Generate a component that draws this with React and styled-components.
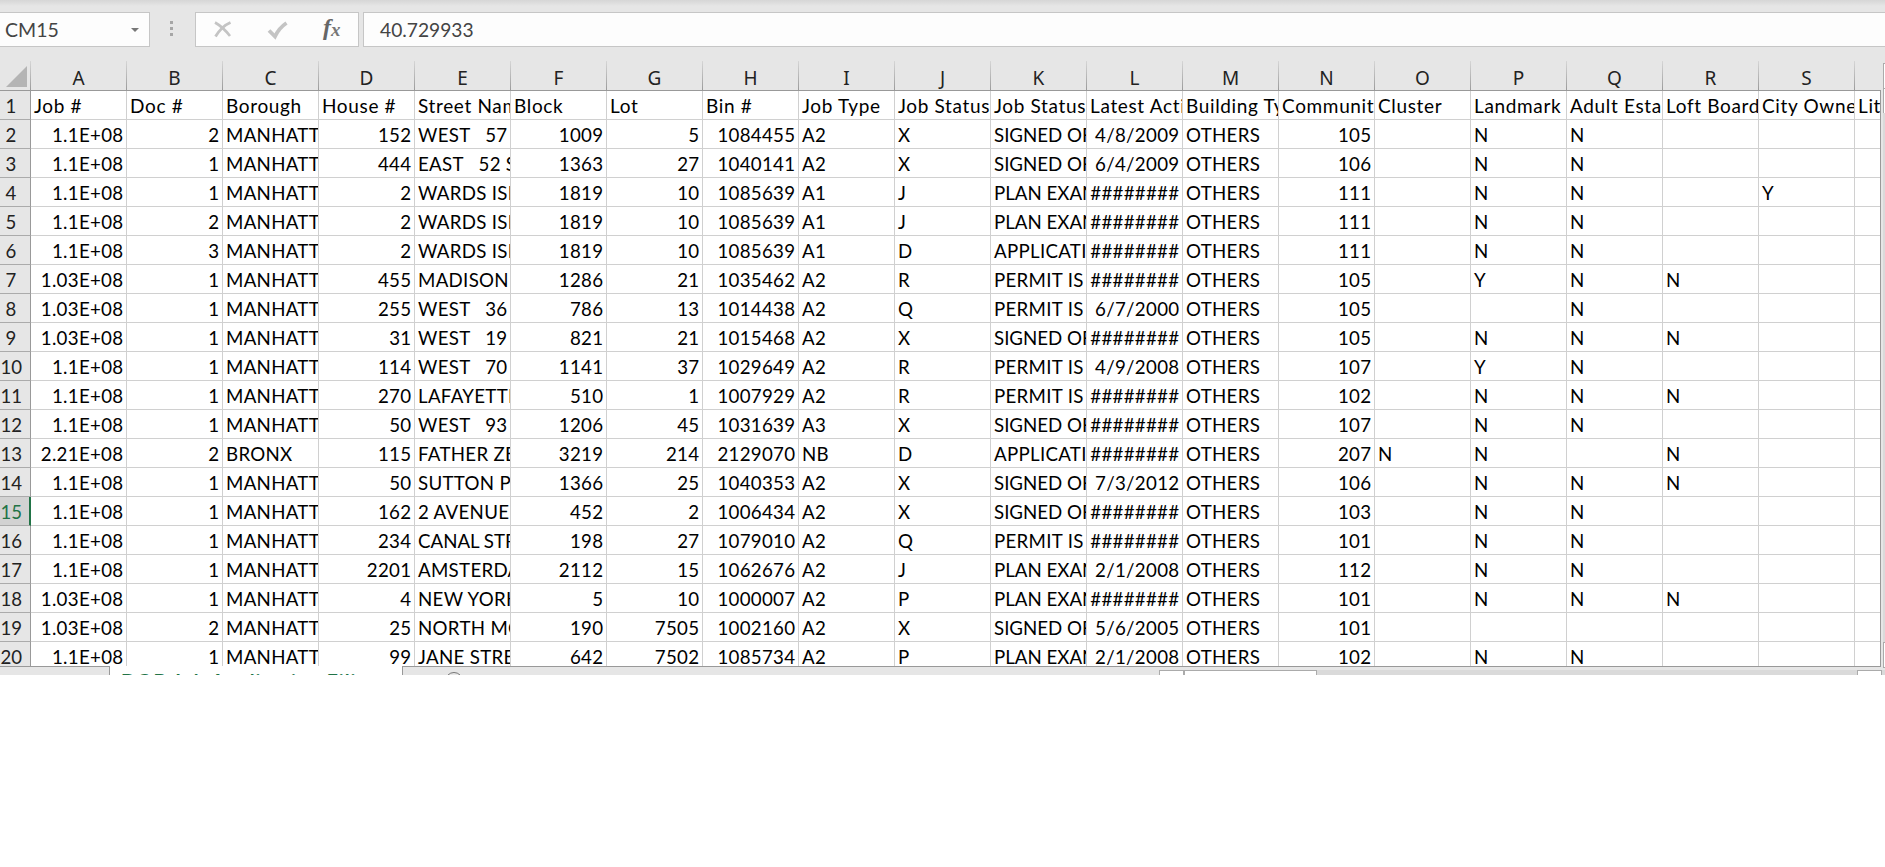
import React from 'react';
import styled, { createGlobalStyle } from 'styled-components';

const GlobalStyle = createGlobalStyle`
  * {
    box-sizing: border-box;
  }

  body {
    margin: 0;
    background: #fff;
    font-family: Lato, 'Liberation Sans', sans-serif;
    color: #000;
    overflow: hidden;
  }
`;

const Window = styled.div`
  width: 1885px;
  height: 675px;
  background: #e6e6e6;
  overflow: hidden;
`;

const FormulaBar = styled.div`
  display: flex;
  height: 61px;
  padding-top: 12px;
  background: linear-gradient(#d6d6d6, #e6e6e6 6px);
`;

const NameBox = styled.div`
  display: flex;
  justify-content: space-between;
  align-items: center;
  width: 150px;
  height: 35px;
  padding: 0 10px 0 5px;
  background: #fdfdfd;
  border: 1px solid #c6c6c6;
  border-left: none;
  font-size: 19.5px;
  color: #444;
`;

const DropArrow = styled.span`
  border: 4px solid transparent;
  border-top-color: #777;
  border-bottom: none;
`;

const Grip = styled.div`
  display: flex;
  flex-direction: column;
  gap: 3px;
  width: 45px;
  padding: 9px 0 0 20px;
`;

const GripDot = styled.span`
  width: 3px;
  height: 3px;
  background: #a6a6a6;
`;

const Actions = styled.div`
  display: flex;
  align-items: center;
  width: 164px;
  height: 35px;
  margin-right: 4px;
  background: #fdfdfd;
  border: 1px solid #c6c6c6;
`;

const FormulaInput = styled.div`
  flex: 1;
  height: 35px;
  padding-left: 16px;
  line-height: 34px;
  background: #fdfdfd;
  border: 1px solid #c6c6c6;
  border-right: none;
  font-size: 19.2px;
  color: #444;
`;

const Sheet = styled.div`
  display: flex;
  height: 606px;
`;

const Grid = styled.div`
  width: 1881px;
  height: 606px;
  overflow: hidden;
`;

const HeaderRow = styled.div`
  display: flex;
  height: 30px;
  border-bottom: 1px solid #999;
`;

const Corner = styled.div`
  display: flex;
  justify-content: flex-end;
  flex: none;
  width: 31px;
  padding: 5px 3px 0 0;
  border-right: 1px solid;
  border-image: linear-gradient(#d8d8d8, #999) 1;
`;

const ColumnHead = styled.div`
  flex: none;
  width: 96px;
  padding-top: 2px;
  line-height: 31px;
  text-align: center;
  font-family: 'Noto Sans', sans-serif;
  font-size: 19px;
  color: #222;
  border-right: 1px solid;
  border-image: linear-gradient(#d8d8d8, #999) 1;
`;

const Body = styled.div`
  height: 576px;
  width: 1881px;
  overflow: hidden;
  border-right: 1px solid #999;
  border-bottom: 1px solid #999;
`;

const Row = styled.div`
  display: flex;
  height: 29px;
`;

const RowHead = styled.div`
  flex: none;
  width: 31px;
  padding-right: ${(props) => (props.$selected ? '7px' : '8px')};
  line-height: 31px;
  text-align: ${(props) => (props.$short ? 'center' : 'right')};
  font-size: 18.6px;
  color: ${(props) => (props.$selected ? '#217346' : '#222')};
  background: ${(props) => (props.$selected ? '#d2d2d2' : '#e6e6e6')};
  border-right: ${(props) => (props.$selected ? '2px solid #217346' : '1px solid #999')};
  border-bottom: 1px solid #ababab;
`;

const Cell = styled.div`
  flex: none;
  width: 96px;
  padding: 0 ${(props) => (props.$right ? '2.6px' : '0')} 0 3px;
  line-height: 31px;
  white-space: pre;
  overflow: hidden;
  text-align: ${(props) => (props.$right ? 'right' : 'left')};
  font-size: 18.7px;
  letter-spacing: ${(props) => (props.$tight ? '0' : '0.3px')};
  background: #fff;
  border-right: 1px solid #d0d0d0;
  border-bottom: 1px solid #d0d0d0;
`;

const TitleCell = styled(Cell)`
  line-height: 29px;
  font-size: 19px;
  letter-spacing: 0.65px;
`;

const ScrollRail = styled.div`
  flex: 1;
  display: flex;
  flex-direction: column;
  padding: 2px 0 0 2px;
`;

const RailButton = styled.div`
  height: 26px;
  margin-bottom: -1px;
  background: #fff;
  border: 1px solid #ababab;
  border-right: none;
`;

const RailTrack = styled.div`
  flex: 1;
  background: #dadada;
`;

const Footer = styled.div`
  display: flex;
  height: 8px;
`;

const TabStrip = styled.div`
  display: flex;
  width: 1159px;
`;

const TabGap = styled.div`
  width: 110px;
  border-right: 1px solid #999;
`;

const SheetTab = styled.div`
  width: 292px;
  height: 9px;
  margin-top: -1px;
  padding-left: 11px;
  line-height: 30px;
  background: #fff;
  font-size: 19.5px;
  font-weight: 700;
  letter-spacing: 1px;
  color: #217346;
  white-space: nowrap;
  overflow: hidden;
`;

const NewSheet = styled.div`
  flex: 1;
  padding: 5px 0 0 42px;
  border-left: 1px solid #999;
`;

const Circle = styled.div`
  width: 18px;
  height: 18px;
  border: 1px solid #777;
  border-radius: 50%;
`;

const ScrollBar = styled.div`
  display: flex;
  flex: 1;
  height: 5px;
  margin-top: 3px;
  padding-right: 3px;
  background: #dadada;
`;

const BarPiece = styled.div`
  width: ${(props) => props.$width}px;
  background: #fff;
  border: 1px solid #ababab;
  border-bottom: none;
`;

const BarTrack = styled.div`
  flex: 1;
`;

const columns = 'ABCDEFGHIJKLMNOPQRS'.split('').concat('');

// columns holding numbers or dates
const numeric = [0, 1, 3, 5, 6, 7, 11, 13];

const titles = [
  'Job #', 'Doc #', 'Borough', 'House #', 'Street Nam', 'Block', 'Lot', 'Bin #', 'Job Type', 'Job Status',
  'Job Status', 'Latest Acti', 'Building Ty', 'Communit', 'Cluster', 'Landmark', 'Adult Esta', 'Loft Board',
  'City Owne', 'Lit',
];

const SIGNED = 'SIGNED OF';
const PLAN = 'PLAN EXAN';
const PERMIT = 'PERMIT IS';
const APPL = 'APPLICATI';
const HASH = '########';
const M = 'MANHATT';
const O = 'OTHERS';

const rows = [
  ['1.1E+08', 2, M, 152, 'WEST   57', 1009, 5, 1084455, 'A2', 'X', SIGNED, '4/8/2009', O, 105, '', 'N', 'N', '', ''],
  ['1.1E+08', 1, M, 444, 'EAST   52 S', 1363, 27, 1040141, 'A2', 'X', SIGNED, '6/4/2009', O, 106, '', 'N', 'N', '', ''],
  ['1.1E+08', 1, M, 2, 'WARDS ISL', 1819, 10, 1085639, 'A1', 'J', PLAN, HASH, O, 111, '', 'N', 'N', '', 'Y'],
  ['1.1E+08', 2, M, 2, 'WARDS ISL', 1819, 10, 1085639, 'A1', 'J', PLAN, HASH, O, 111, '', 'N', 'N', '', ''],
  ['1.1E+08', 3, M, 2, 'WARDS ISL', 1819, 10, 1085639, 'A1', 'D', APPL, HASH, O, 111, '', 'N', 'N', '', ''],
  ['1.03E+08', 1, M, 455, 'MADISON', 1286, 21, 1035462, 'A2', 'R', PERMIT, HASH, O, 105, '', 'Y', 'N', 'N', ''],
  ['1.03E+08', 1, M, 255, 'WEST   36', 786, 13, 1014438, 'A2', 'Q', PERMIT, '6/7/2000', O, 105, '', '', 'N', '', ''],
  ['1.03E+08', 1, M, 31, 'WEST   19', 821, 21, 1015468, 'A2', 'X', SIGNED, HASH, O, 105, '', 'N', 'N', 'N', ''],
  ['1.1E+08', 1, M, 114, 'WEST   70', 1141, 37, 1029649, 'A2', 'R', PERMIT, '4/9/2008', O, 107, '', 'Y', 'N', '', ''],
  ['1.1E+08', 1, M, 270, 'LAFAYETTE', 510, 1, 1007929, 'A2', 'R', PERMIT, HASH, O, 102, '', 'N', 'N', 'N', ''],
  ['1.1E+08', 1, M, 50, 'WEST   93', 1206, 45, 1031639, 'A3', 'X', SIGNED, HASH, O, 107, '', 'N', 'N', '', ''],
  ['2.21E+08', 2, 'BRONX', 115, 'FATHER ZE', 3219, 214, 2129070, 'NB', 'D', APPL, HASH, O, 207, 'N', 'N', '', 'N', ''],
  ['1.1E+08', 1, M, 50, 'SUTTON P', 1366, 25, 1040353, 'A2', 'X', SIGNED, '7/3/2012', O, 106, '', 'N', 'N', 'N', ''],
  ['1.1E+08', 1, M, 162, '2 AVENUE', 452, 2, 1006434, 'A2', 'X', SIGNED, HASH, O, 103, '', 'N', 'N', '', ''],
  ['1.1E+08', 1, M, 234, 'CANAL STR', 198, 27, 1079010, 'A2', 'Q', PERMIT, HASH, O, 101, '', 'N', 'N', '', ''],
  ['1.1E+08', 1, M, 2201, 'AMSTERDA', 2112, 15, 1062676, 'A2', 'J', PLAN, '2/1/2008', O, 112, '', 'N', 'N', '', ''],
  ['1.03E+08', 1, M, 4, 'NEW YORK', 5, 10, 1000007, 'A2', 'P', PLAN, HASH, O, 101, '', 'N', 'N', 'N', ''],
  ['1.03E+08', 2, M, 25, 'NORTH MO', 190, 7505, 1002160, 'A2', 'X', SIGNED, '5/6/2005', O, 101, '', '', '', '', ''],
  ['1.1E+08', 1, M, 99, 'JANE STRE', 642, 7502, 1085734, 'A2', 'P', PLAN, '2/1/2008', O, 102, '', 'N', 'N', '', ''],
];

// labels that only show their last letter when set without extra spacing
const tight = [SIGNED, PLAN, 'CANAL STR'];

const ActionIcons = () => (
  <svg width="160" height="33" viewBox="0 0 160 33">
    <path d="M19 9.5Q27 14 34 23" stroke="#c4c4c4" strokeWidth="2.6" fill="none" />
    <path d="M34.5 9.5Q26 13 19.5 23.5" stroke="#c4c4c4" strokeWidth="2.8" fill="none" />
    <path d="M73 17.5l6 6Q83 15 90.5 10" stroke="#c4c4c4" strokeWidth="3.8" fill="none" />
    <text x="127" y="22" fontFamily="Liberation Serif, serif" fontStyle="italic" fontWeight="700" fontSize="24" fill="#666">f</text>
    <text x="135" y="23" fontFamily="Liberation Serif, serif" fontStyle="italic" fontWeight="700" fontSize="19" fill="#777">x</text>
  </svg>
);

const App = () => (
  <>
    <GlobalStyle />
    <Window>
      <FormulaBar>
        <NameBox>
          CM15
          <DropArrow />
        </NameBox>
        <Grip>
          <GripDot />
          <GripDot />
          <GripDot />
        </Grip>
        <Actions>
          <ActionIcons />
        </Actions>
        <FormulaInput>40.729933</FormulaInput>
      </FormulaBar>
      <Sheet>
        <Grid>
          <HeaderRow>
            <Corner>
              <svg width="21" height="21" viewBox="0 0 21 21">
                <path d="M21 0v21H0z" fill="#b4b4b4" />
              </svg>
            </Corner>
            {columns.map((name, index) => (
              <ColumnHead key={index}>{name}</ColumnHead>
            ))}
          </HeaderRow>
          <Body>
            <Row>
              <RowHead $short>1</RowHead>
              {titles.map((title, index) => (
                <TitleCell key={index}>{title}</TitleCell>
              ))}
            </Row>
            {rows.map((row, index) => (
              <Row key={index}>
                <RowHead $short={index < 8} $selected={index === 13}>{index + 2}</RowHead>
                {columns.map((name, col) => (
                  <Cell key={col} $right={numeric.includes(col)} $tight={tight.includes(row[col])}>
                    {row[col]}
                  </Cell>
                ))}
              </Row>
            ))}
          </Body>
        </Grid>
        <ScrollRail>
          <RailButton />
          <RailButton />
          <RailTrack />
          <RailButton />
        </ScrollRail>
      </Sheet>
      <Footer>
        <TabStrip>
          <TabGap />
          <SheetTab>DOB Job Application Filings</SheetTab>
          <NewSheet>
            <Circle />
          </NewSheet>
        </TabStrip>
        <ScrollBar>
          <BarPiece $width={25} />
          <BarPiece $width={133} />
          <BarTrack />
          <BarPiece $width={25} />
        </ScrollBar>
      </Footer>
    </Window>
  </>
);

export default App;
